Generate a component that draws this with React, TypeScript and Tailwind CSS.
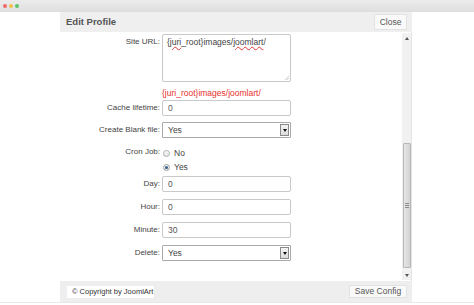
import React from "react";

const font = "font-['Liberation_Sans',Arial,sans-serif]";

function Label({ children }: { children: React.ReactNode }) {
  return <div className="w-[100px] shrink-0 text-right text-[8px] text-[#444] leading-[10px]">{children}</div>;
}

function TextInput({ value }: { value: string }) {
  return (
    <div className="w-[129px] h-[16px] ml-[2px] border border-[#c9c9c9] rounded-[2px] bg-white flex items-center pl-[5px] text-[8.5px] text-[#555]">
      {value}
    </div>
  );
}

function SelectBox({ value }: { value: string }) {
  return (
    <div className="w-[129px] h-[16px] ml-[2px] border border-[#a9a9a9] rounded-[1px] bg-white flex items-center justify-between pl-[5px] pr-[1px] text-[8.5px] text-[#444]">
      <span>{value}</span>
      <div className="w-[9px] h-[12px] border border-[#8a8a8a] bg-gradient-to-b from-[#f4f4f4] to-[#dcdcdc] flex items-center justify-center">
        <div className="w-0 h-0 border-l-[2.5px] border-r-[2.5px] border-t-[3px] border-l-transparent border-r-transparent border-t-[#111]" />
      </div>
    </div>
  );
}

function Row({ label, children, className }: { label: string; children: React.ReactNode; className: string }) {
  return (
    <div className={`flex items-center h-[16px] ${className}`}>
      <Label>{label}</Label>
      {children}
    </div>
  );
}

function Radio({ checked, label, className }: { checked?: boolean; label: string; className: string }) {
  return (
    <div className={`flex items-center h-[12px] ${className}`}>
      <div className="w-[100px] shrink-0" />
      <div className="ml-[3px] w-[7px] h-[7px] rounded-full border border-[#a0a0a0] bg-gradient-to-b from-[#fafafa] to-[#e2e2e2] flex items-center justify-center">
        {checked && <div className="w-[3px] h-[3px] rounded-full bg-[#2f5f8a]" />}
      </div>
      <span className="ml-[4px] text-[8.5px] text-[#444]">{label}</span>
    </div>
  );
}

export default function App() {
  return (
    <div className={`w-[474px] h-[305px] bg-white overflow-hidden ${font}`}>
      <div className="h-[12px] bg-gradient-to-b from-[#ececec] to-[#dedede] flex items-center pl-[3px] gap-[2px]">
        <div className="w-[4px] h-[4px] rounded-full bg-[#ef6b6b]" />
        <div className="w-[4px] h-[4px] rounded-full bg-[#f2c14e]" />
        <div className="w-[4px] h-[4px] rounded-full bg-[#5cc36a]" />
      </div>

      <div className="ml-[60px] w-[352px] flex flex-col">
        <div className="h-[20px] bg-[#efefef] flex items-center justify-between pl-[6px] pr-[5px]">
          <span className="text-[9.5px] font-bold text-[#555]">Edit Profile</span>
          <div className="w-[33px] h-[16px] bg-[#f9f9f9] border border-[#e2e2e2] flex items-center justify-center text-[8.5px] text-[#555]">
            Close
          </div>
        </div>

        <div className="h-[249px] flex border-r border-[#e4e4e4]">
          <div className="flex-1 flex flex-col pt-[2px]">
            <div className="flex items-start">
              <div className="pt-[3px]">
                <Label>Site URL:</Label>
              </div>
              <div className="relative w-[129px] h-[48px] ml-[2px] border border-[#c9c9c9] rounded-[2px] bg-white pl-[4px] pt-[2px] text-[8.5px] text-[#444] leading-[10px]">
                {"{"}
                <span className="underline decoration-wavy decoration-[#e23b3b] decoration-[0.5px]">juri</span>
                _root{"}"}images/
                <span className="underline decoration-wavy decoration-[#e23b3b] decoration-[0.5px]">joomlart</span>/
                <svg className="absolute right-[1px] bottom-[1px]" width="5" height="5" viewBox="0 0 5 5">
                  <path d="M1 5 L5 1 M3 5 L5 3" stroke="#b5b5b5" strokeWidth="0.7" />
                </svg>
              </div>
            </div>
            <div className="flex items-center h-[12px] mt-[5px]">
              <div className="w-[100px] shrink-0" />
              <span className="ml-[2px] text-[8.5px] text-[#e8302c]">{"{juri_root}images/joomlart/"}</span>
            </div>
            <Row label="Cache lifetime:" className="mt-[1px]">
              <TextInput value="0" />
            </Row>
            <Row label="Create Blank file:" className="mt-[6px]">
              <SelectBox value="Yes" />
            </Row>
            <div className="flex items-center h-[12px] mt-[8px]">
              <Label>Cron Job:</Label>
              <div className="ml-[3px] w-[7px] h-[7px] mt-[2px] rounded-full border border-[#b0b0b0] bg-gradient-to-b from-[#fafafa] to-[#e2e2e2]" />
              <span className="ml-[4px] mt-[2px] text-[8.5px] text-[#444]">No</span>
            </div>
            <Radio checked label="Yes" className="mt-[3px]" />
            <Row label="Day:" className="mt-[3px]">
              <TextInput value="0" />
            </Row>
            <Row label="Hour:" className="mt-[7px]">
              <TextInput value="0" />
            </Row>
            <Row label="Minute:" className="mt-[7px]">
              <TextInput value="30" />
            </Row>
            <Row label="Delete:" className="mt-[7px]">
              <SelectBox value="Yes" />
            </Row>
          </div>

          <div className="w-[9px] mt-[1px] mb-[1px] bg-[#f1f1f1] flex flex-col items-center">
            <div className="h-[10px] flex items-center justify-center">
              <div className="w-0 h-0 border-l-[2px] border-r-[2px] border-b-[3px] border-l-transparent border-r-transparent border-b-[#555]" />
            </div>
            <div className="flex-1 w-full flex flex-col">
              <div className="h-[100px]" />
              <div className="h-[125px] mx-[0.5px] border border-[#b7b7b7] rounded-[1px] bg-gradient-to-r from-[#e6e6e6] to-[#d2d2d2] flex flex-col items-center justify-center gap-[1px]">
                <div className="w-[4px] h-[1px] bg-[#8d8d8d]" />
                <div className="w-[4px] h-[1px] bg-[#8d8d8d]" />
                <div className="w-[4px] h-[1px] bg-[#8d8d8d]" />
              </div>
            </div>
            <div className="h-[10px] flex items-center justify-center">
              <div className="w-0 h-0 border-l-[2px] border-r-[2px] border-t-[3px] border-l-transparent border-r-transparent border-t-[#555]" />
            </div>
          </div>
        </div>

        <div className="h-[21px] bg-[#eeeeee] flex items-center justify-between pl-[7px] pr-[5px]">
          <div className="w-[87px] h-[12px] bg-white flex items-center pl-[5px] text-[7.5px] text-[#333]">
            © Copyright by JoomlArt
          </div>
          <div className="w-[58px] h-[13px] bg-[#f9f9f9] border border-[#e2e2e2] flex items-center justify-center text-[8.5px] text-[#555]">
            Save Config
          </div>
        </div>
      </div>
      <div className="h-[1px] bg-[#e8e8e8]" />
    </div>
  );
}
